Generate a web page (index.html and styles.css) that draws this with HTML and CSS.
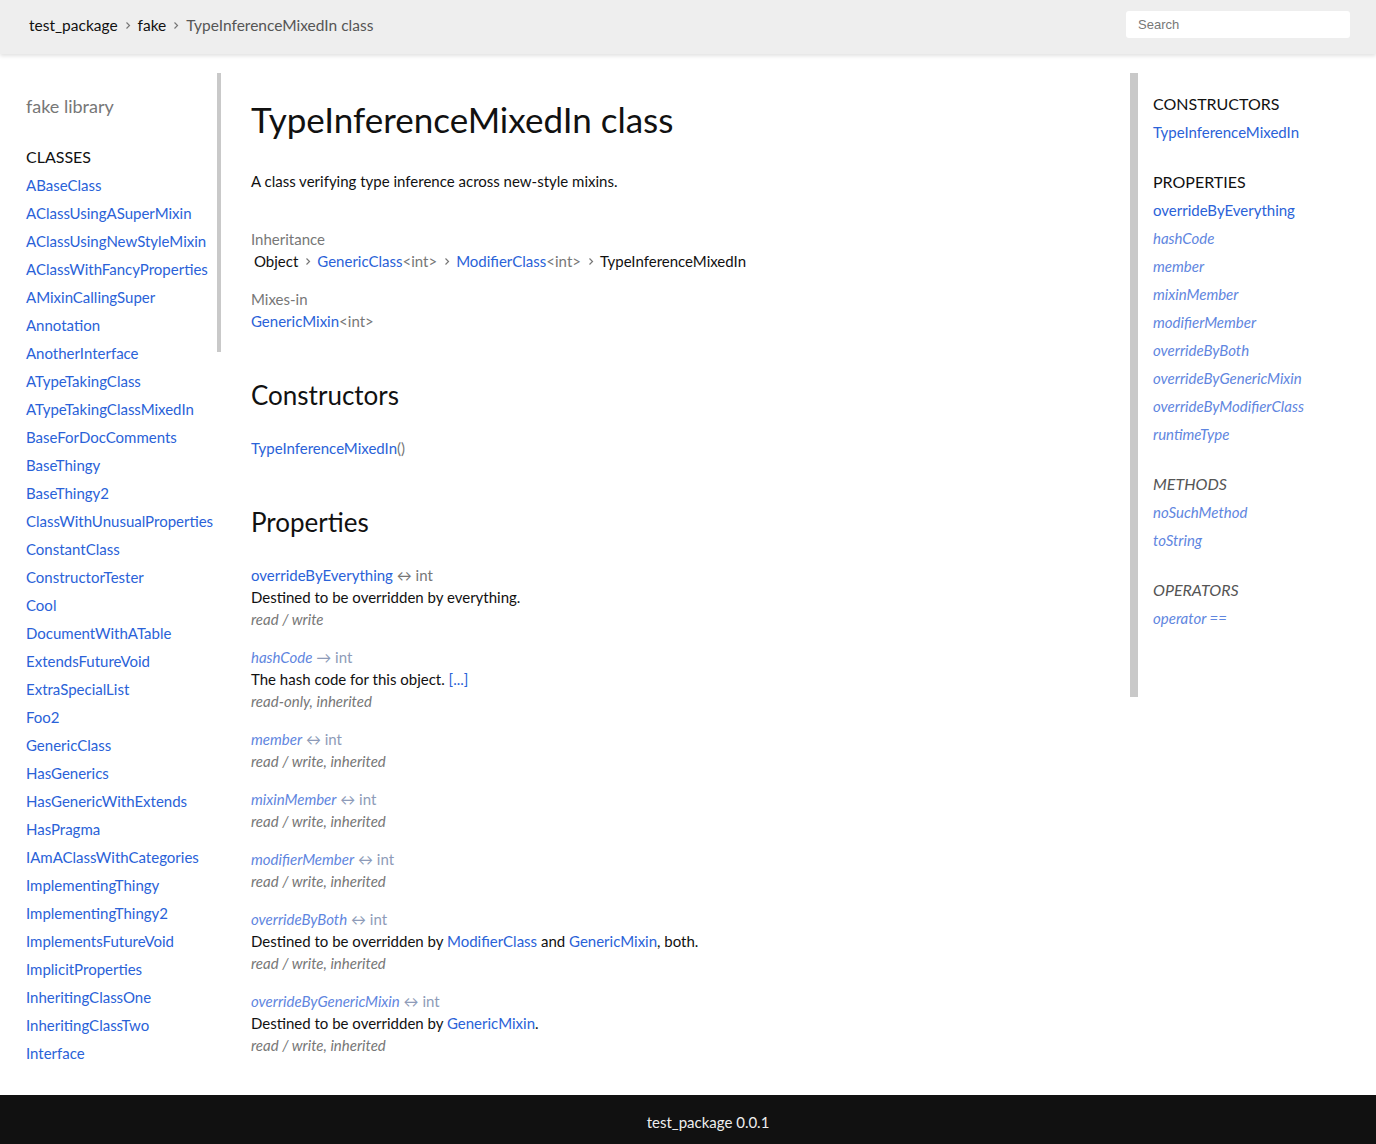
FILE: index.html
```html
<!DOCTYPE html>
<html lang="en">
<head>
<meta charset="utf-8">
<title>TypeInferenceMixedIn class - fake library - Dart API</title>
<link rel="stylesheet" href="styles.css">
</head>
<body>
<header class="top">
  <ol class="crumbs">
    <li><a class="crumb-link" href="#">test_package</a></li>
    <li class="sep"><svg width="6" height="9" viewBox="0 0 6 9"><path d="M1.5 1.5l3 3-3 3" fill="none" stroke="#777" stroke-width="1.2"/></svg></li>
    <li><a class="crumb-link" href="#">fake</a></li>
    <li class="sep"><svg width="6" height="9" viewBox="0 0 6 9"><path d="M1.5 1.5l3 3-3 3" fill="none" stroke="#777" stroke-width="1.2"/></svg></li>
    <li class="crumb-current">TypeInferenceMixedIn class</li>
  </ol>
  <input class="search" type="text" placeholder="Search">
</header>

<div class="page">
  <nav class="side-left">
    <div class="scroll-thumb thumb-left"></div>
    <h5 class="lib-name">fake library</h5>
    <ol class="nav-list">
      <li class="nav-head">Classes</li>
      <li><a href="#">ABaseClass</a></li>
      <li><a href="#">AClassUsingASuperMixin</a></li>
      <li><a href="#">AClassUsingNewStyleMixin</a></li>
      <li><a href="#">AClassWithFancyProperties</a></li>
      <li><a href="#">AMixinCallingSuper</a></li>
      <li><a href="#">Annotation</a></li>
      <li><a href="#">AnotherInterface</a></li>
      <li><a href="#">ATypeTakingClass</a></li>
      <li><a href="#">ATypeTakingClassMixedIn</a></li>
      <li><a href="#">BaseForDocComments</a></li>
      <li><a href="#">BaseThingy</a></li>
      <li><a href="#">BaseThingy2</a></li>
      <li><a href="#">ClassWithUnusualProperties</a></li>
      <li><a href="#">ConstantClass</a></li>
      <li><a href="#">ConstructorTester</a></li>
      <li><a href="#">Cool</a></li>
      <li><a href="#">DocumentWithATable</a></li>
      <li><a href="#">ExtendsFutureVoid</a></li>
      <li><a href="#">ExtraSpecialList</a></li>
      <li><a href="#">Foo2</a></li>
      <li><a href="#">GenericClass</a></li>
      <li><a href="#">HasGenerics</a></li>
      <li><a href="#">HasGenericWithExtends</a></li>
      <li><a href="#">HasPragma</a></li>
      <li><a href="#">IAmAClassWithCategories</a></li>
      <li><a href="#">ImplementingThingy</a></li>
      <li><a href="#">ImplementingThingy2</a></li>
      <li><a href="#">ImplementsFutureVoid</a></li>
      <li><a href="#">ImplicitProperties</a></li>
      <li><a href="#">InheritingClassOne</a></li>
      <li><a href="#">InheritingClassTwo</a></li>
      <li><a href="#">Interface</a></li>
    </ol>
  </nav>

  <main class="content">
    <h1 class="title">TypeInferenceMixedIn class</h1>
    <p class="desc">A class verifying type inference across new-style mixins.</p>

    <dl class="meta">
      <dt>Inheritance</dt>
      <dd class="chain">
        <span class="dark">Object</span>
        <span class="sep"><svg width="6" height="9" viewBox="0 0 6 9"><path d="M1.5 1.5l3 3-3 3" fill="none" stroke="#777" stroke-width="1.2"/></svg></span>
        <span><a href="#">GenericClass</a><span class="type-arg">&lt;int&gt;</span></span>
        <span class="sep"><svg width="6" height="9" viewBox="0 0 6 9"><path d="M1.5 1.5l3 3-3 3" fill="none" stroke="#777" stroke-width="1.2"/></svg></span>
        <span><a href="#">ModifierClass</a><span class="type-arg">&lt;int&gt;</span></span>
        <span class="sep"><svg width="6" height="9" viewBox="0 0 6 9"><path d="M1.5 1.5l3 3-3 3" fill="none" stroke="#777" stroke-width="1.2"/></svg></span>
        <span class="dark">TypeInferenceMixedIn</span>
      </dd>
      <dt class="gap">Mixes-in</dt>
      <dd><a href="#">GenericMixin</a><span class="type-arg">&lt;int&gt;</span></dd>
    </dl>

    <h2 class="section">Constructors</h2>
    <div class="ctor"><a href="#">TypeInferenceMixedIn</a><span class="type-arg">()</span></div>

    <h2 class="section">Properties</h2>
    <dl class="props">
      <div class="prop">
        <dt><a href="#">overrideByEverything</a> <span class="sig">↔ int</span></dt>
        <dd>Destined to be overridden by everything.</dd>
        <dd class="features">read / write</dd>
      </div>
      <div class="prop inherited">
        <dt><a href="#">hashCode</a> <span class="sig">→ int</span></dt>
        <dd>The hash code for this object. <a class="more" href="#">[...]</a></dd>
        <dd class="features">read-only, inherited</dd>
      </div>
      <div class="prop inherited">
        <dt><a href="#">member</a> <span class="sig">↔ int</span></dt>
        <dd class="features">read / write, inherited</dd>
      </div>
      <div class="prop inherited">
        <dt><a href="#">mixinMember</a> <span class="sig">↔ int</span></dt>
        <dd class="features">read / write, inherited</dd>
      </div>
      <div class="prop inherited">
        <dt><a href="#">modifierMember</a> <span class="sig">↔ int</span></dt>
        <dd class="features">read / write, inherited</dd>
      </div>
      <div class="prop inherited">
        <dt><a href="#">overrideByBoth</a> <span class="sig">↔ int</span></dt>
        <dd>Destined to be overridden by <a class="plain" href="#">ModifierClass</a> and <a class="plain" href="#">GenericMixin</a>, both.</dd>
        <dd class="features">read / write, inherited</dd>
      </div>
      <div class="prop inherited">
        <dt><a href="#">overrideByGenericMixin</a> <span class="sig">↔ int</span></dt>
        <dd>Destined to be overridden by <a class="plain" href="#">GenericMixin</a>.</dd>
        <dd class="features">read / write, inherited</dd>
      </div>
    </dl>
  </main>

  <nav class="side-right">
    <div class="scroll-thumb thumb-right"></div>
    <ol class="nav-list">
      <li class="nav-head">Constructors</li>
      <li><a href="#">TypeInferenceMixedIn</a></li>
      <li class="nav-head spaced">Properties</li>
      <li><a href="#">overrideByEverything</a></li>
      <li class="inh"><a href="#">hashCode</a></li>
      <li class="inh"><a href="#">member</a></li>
      <li class="inh"><a href="#">mixinMember</a></li>
      <li class="inh"><a href="#">modifierMember</a></li>
      <li class="inh"><a href="#">overrideByBoth</a></li>
      <li class="inh"><a href="#">overrideByGenericMixin</a></li>
      <li class="inh"><a href="#">overrideByModifierClass</a></li>
      <li class="inh"><a href="#">runtimeType</a></li>
      <li class="nav-head spaced inh-head">Methods</li>
      <li class="inh"><a href="#">noSuchMethod</a></li>
      <li class="inh"><a href="#">toString</a></li>
      <li class="nav-head spaced inh-head">Operators</li>
      <li class="inh"><a href="#">operator ==</a></li>
    </ol>
  </nav>
</div>

<footer class="foot">
  <span class="foot-text">test_package 0.0.1</span>
</footer>
</body>
</html>
```

FILE: styles.css
```css
* { box-sizing: border-box; }

body {
  margin: 0;
  font-family: "Lato", "Source Sans Pro", "Liberation Sans", sans-serif;
  font-size: 15px;
  line-height: 22px;
  color: #111;
  background: #fff;
}

a { color: #2a62d8; text-decoration: none; }

ol, dl, dd { margin: 0; padding: 0; list-style: none; }

/* header */
.top {
  height: 54px;
  background: #eee;
  box-shadow: 0 2px 4px rgba(0,0,0,0.12);
  display: flex;
  align-items: center;
  justify-content: space-between;
  padding: 0 26px 0 29px;
  position: relative;
  z-index: 2;
}
.crumbs {
  display: flex;
  align-items: center;
  font-size: 15.5px;
  margin-top: -4px;
}
.crumb-link { color: #111; }
.crumb-current { color: #555; }
.sep {
  display: inline-flex;
  align-items: center;
  padding: 0 7px 0 7px;
}
.search {
  width: 224px;
  height: 27px;
  border: none;
  border-radius: 3px;
  background: #fff;
  padding: 0 12px;
  font-family: "Liberation Sans", Arial, sans-serif;
  font-size: 13px;
  color: #333;
  margin-top: -5px;
  outline: none;
}
.search::placeholder { color: #777; }

/* layout */
.page {
  display: flex;
  align-items: flex-start;
  min-height: 1041px;
}

.side-left {
  position: relative;
  width: 221px;
  flex: none;
  padding: 38px 0 28px 26px;
}
.scroll-thumb {
  position: absolute;
  top: 19px;
  background: #c9c9c9;
}
.thumb-left { right: 0; width: 4px; height: 279px; }
.thumb-right { left: 0; width: 8px; height: 624px; }

.lib-name {
  margin: 0 0 23px;
  font-size: 18px;
  line-height: 28px;
  font-weight: 400;
  color: #777;
}
.nav-list li {
  line-height: 28px;
  font-size: 15px;
  white-space: nowrap;
}
.nav-head {
  text-transform: uppercase;
  font-size: 16px !important;
  color: #111;
}

/* main */
.content {
  flex: 1;
  padding: 43px 20px 0 30px;
}
.title {
  margin: 0 0 29px;
  font-size: 35px;
  line-height: 44px;
  font-weight: 400;
  color: #111;
}
.desc { margin: 0 0 36px; }

.meta dt { color: #777; }
.meta dt.gap { margin-top: 16px; }
.chain {
  display: flex;
  align-items: center;
  padding-left: 3px;
}
.chain .sep { padding: 0 6px 0 7px; }
.dark { color: #111; }
.type-arg { color: #777; }

.section {
  margin: 47px 0 26px;
  font-size: 26px;
  line-height: 32px;
  font-weight: 400;
  color: #111;
}

.prop { margin-bottom: 16px; }
.prop:last-child { margin-bottom: 0; }
.sig { color: #777; }
.features { font-style: italic; color: #777; }
.inherited dt a { font-style: italic; font-weight: 400; color: #5f86e0; }
.inherited .sig { color: #8e9bb8; }
.more { color: #2a62d8; }

/* right */
.side-right {
  position: relative;
  width: 246px;
  flex: none;
  padding: 36px 0 0 23px;
}
.nav-head.spaced { margin-top: 22px; }
.nav-list li.inh a { font-style: italic; font-weight: 400; color: #5f86e0; }
.nav-head.inh-head { font-style: italic; color: #555; }

/* footer */
.foot {
  background: #111;
  height: 49px;
  display: flex;
  align-items: center;
  justify-content: center;
  padding: 4px 0 0 40px;
  color: #eee;
  font-size: 15px;
}
```
